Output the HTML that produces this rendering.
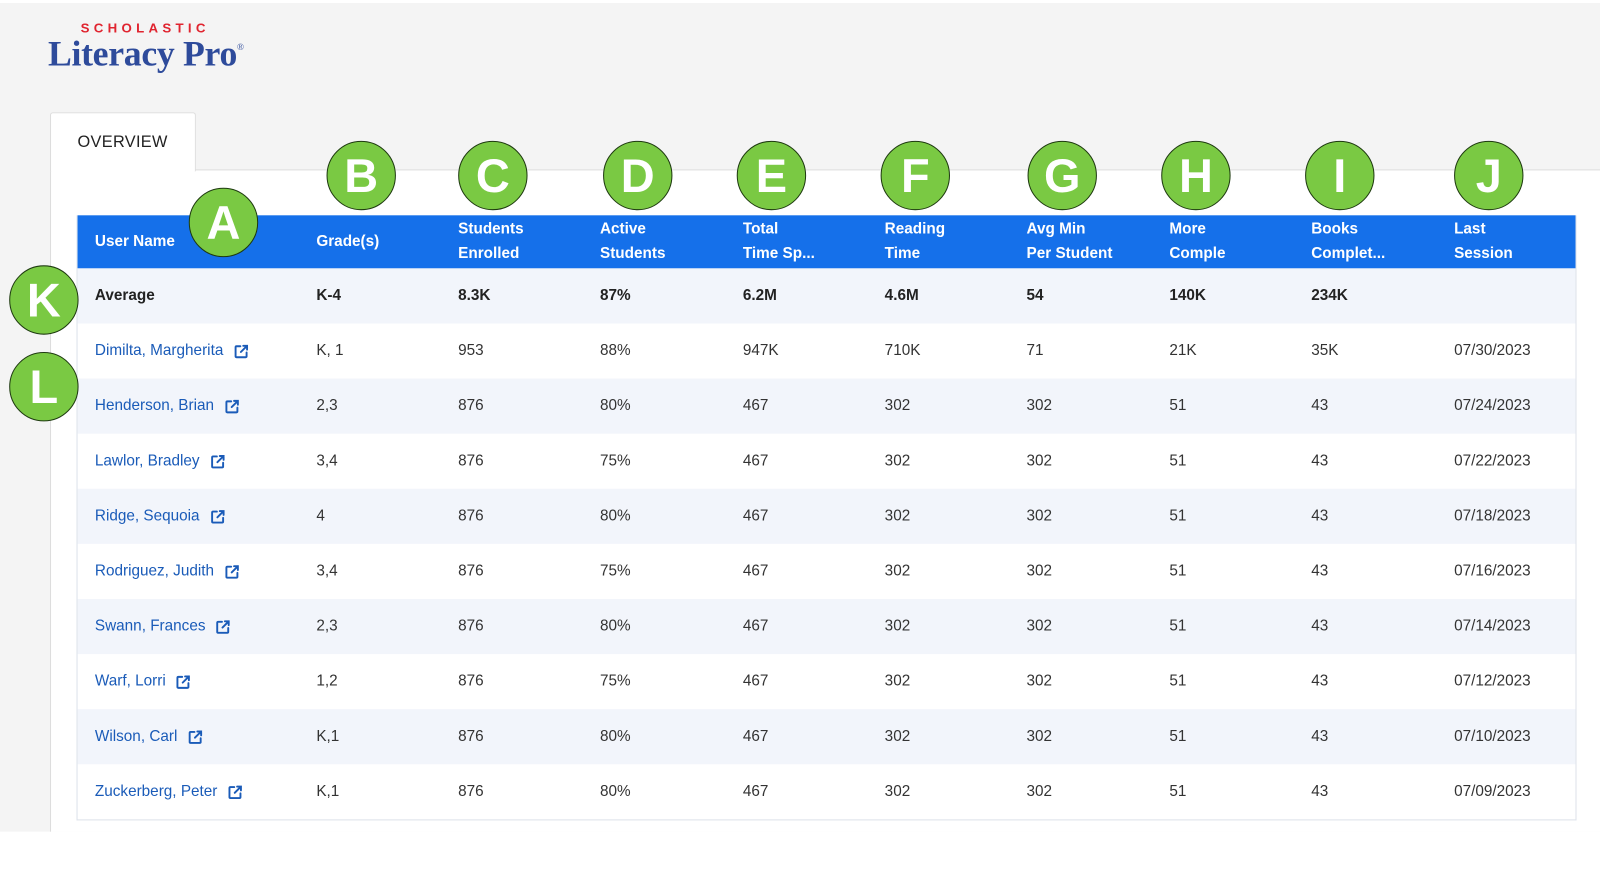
<!DOCTYPE html>
<html><head><meta charset="utf-8">
<style>
*{margin:0;padding:0;box-sizing:border-box}
body{width:1600px;height:856px;background:#fff;font-family:"Liberation Sans",sans-serif;position:relative;overflow:hidden}
#w{position:absolute;left:0;top:0;width:1600px;height:856px;transform:scale(1.0204);transform-origin:0 0}
.bg{position:absolute;left:0;top:3px;width:1600px;height:812px;background:#f4f4f4}
.panel{position:absolute;left:49px;top:166px;width:1560px;height:649px;background:#fff;border-left:1.5px solid #ddd;border-top:1px solid #ddd}
.tab{position:absolute;left:49px;top:110px;width:143px;height:58px;background:#fff;border:1px solid #ddd;border-bottom:none;border-radius:3px 3px 0 0;font-size:16px;color:#222;padding:20px 0 0 26px;letter-spacing:.3px}
.tbl{position:absolute;left:75px;top:211px;width:1470px;border:1px solid #dde2ea;border-top:none}
.hd{height:52px;background:#1570ea;color:#fff;font-weight:bold;font-size:15px;position:relative}
.row{height:54px;position:relative;font-size:15px;color:#333}
.row.alt{background:#f2f5fb}
.c{position:absolute;top:0;height:100%;display:flex;align-items:center;line-height:24px}
.hd .c{font-weight:bold}
.avg .c{font-weight:bold;color:#222}
a{color:#1a5bb8;text-decoration:none;display:flex;align-items:center}
a svg{margin-left:10px}
.b{position:absolute;width:68px;height:68px;border-radius:50%;background:#7ac943;border:1.5px solid #1e3a10;color:#fff;font-weight:bold;font-size:46px;display:flex;align-items:center;justify-content:center;line-height:1}
.logo1{position:absolute;left:79px;top:20px;color:#e0242f;font-size:13px;font-weight:bold;letter-spacing:4.2px}
.logo2{position:absolute;left:47px;top:33px;color:#2e4b9b;font-family:"Liberation Serif",serif;font-weight:bold;font-size:35px;letter-spacing:-.3px}
.logo2 sup{font-size:9px;font-weight:normal;vertical-align:top;position:relative;top:8px}
</style></head><body>
<div id="w">
<div class="bg"></div>
<div class="logo1">SCHOLASTIC</div>
<div class="logo2">Literacy Pro<sup>®</sup></div>
<div class="panel"></div>
<div class="tab">OVERVIEW</div>
<div class="tbl" id="t">
<div class="hd">
<div class="c" style="left:17px">User Name</div>
<div class="c" style="left:234px">Grade(s)</div>
<div class="c" style="left:373px">Students<br>Enrolled</div>
<div class="c" style="left:512px">Active<br>Students</div>
<div class="c" style="left:652px">Total<br>Time Sp...</div>
<div class="c" style="left:791px">Reading<br>Time</div>
<div class="c" style="left:930px">Avg Min<br>Per Student</div>
<div class="c" style="left:1070px">More<br>Comple</div>
<div class="c" style="left:1209px">Books<br>Complet...</div>
<div class="c" style="left:1349px">Last<br>Session</div>
</div>
<div class="row alt avg">
<div class="c" style="left:17px">Average</div>
<div class="c" style="left:234px">K-4</div>
<div class="c" style="left:373px">8.3K</div>
<div class="c" style="left:512px">87%</div>
<div class="c" style="left:652px">6.2M</div>
<div class="c" style="left:791px">4.6M</div>
<div class="c" style="left:930px">54</div>
<div class="c" style="left:1070px">140K</div>
<div class="c" style="left:1209px">234K</div>
</div>
</div>
</div>
<script>
var L=[17,234,373,512,652,791,930,1070,1209,1349];
var R=[["Dimilta, Margherita","K, 1","953","88%","947K","710K","71","21K","35K","07/30/2023"],
["Henderson, Brian","2,3","876","80%","467","302","302","51","43","07/24/2023"],
["Lawlor, Bradley","3,4","876","75%","467","302","302","51","43","07/22/2023"],
["Ridge, Sequoia","4","876","80%","467","302","302","51","43","07/18/2023"],
["Rodriguez, Judith","3,4","876","75%","467","302","302","51","43","07/16/2023"],
["Swann, Frances","2,3","876","80%","467","302","302","51","43","07/14/2023"],
["Warf, Lorri","1,2","876","75%","467","302","302","51","43","07/12/2023"],
["Wilson, Carl","K,1","876","80%","467","302","302","51","43","07/10/2023"],
["Zuckerberg, Peter","K,1","876","80%","467","302","302","51","43","07/09/2023"]];
var ic='<svg width="15" height="15" viewBox="0 0 16 16" fill="none" stroke="#1a5bb8" stroke-width="2" stroke-linecap="round"><path d="M7 2.5H3a1 1 0 0 0-1 1V13a1 1 0 0 0 1 1h9.5a1 1 0 0 0 1-1V9"/><path d="M10 2h4v4M14 2L7.5 8.5"/></svg>';
var h='';
R.forEach(function(r,i){h+='<div class="row'+(i%2?' alt':'')+'">';
r.forEach(function(v,j){h+='<div class="c" style="left:'+L[j]+'px">'+(j==0?'<a>'+v+ic+'</a>':v)+'</div>';});h+='</div>';});
document.getElementById('t').insertAdjacentHTML('beforeend',h);
var B=[["A",219,218],["B",354,172],["C",483,172],["D",625,172],["E",756,172],["F",897,172],["G",1041,172],["H",1172,172],["I",1313,172],["J",1459,172],["K",43,294],["L",43,379]];
var s='';B.forEach(function(b){s+='<div class="b" style="left:'+(b[1]-34)+'px;top:'+(b[2]-34)+'px">'+b[0]+'</div>';});
document.getElementById('w').insertAdjacentHTML('beforeend',s);
</script>
</body></html>
